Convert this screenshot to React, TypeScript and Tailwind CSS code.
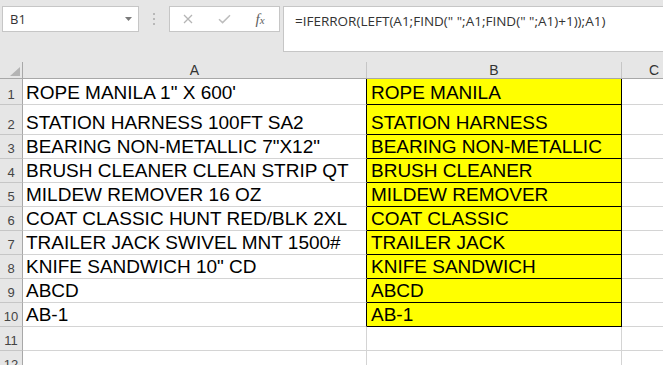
import React from "react";

const aVals = [
  'ROPE MANILA 1" X 600\'',
  "STATION HARNESS 100FT SA2",
  'BEARING NON-METALLIC 7"X12"',
  "BRUSH CLEANER CLEAN STRIP QT",
  "MILDEW REMOVER 16 OZ",
  "COAT CLASSIC HUNT RED/BLK 2XL",
  "TRAILER JACK SWIVEL MNT 1500#",
  'KNIFE SANDWICH 10" CD',
  "ABCD",
  "AB-1",
  "",
  "",
];
const bVals = [
  "ROPE MANILA",
  "STATION HARNESS",
  "BEARING NON-METALLIC",
  "BRUSH CLEANER",
  "MILDEW REMOVER",
  "COAT CLASSIC",
  "TRAILER JACK",
  "KNIFE SANDWICH",
  "ABCD",
  "AB-1",
  "",
  "",
];
const heights = ["h-[26px]", "h-[30px]", "h-[24px]", "h-[24px]", "h-[24px]", "h-[24px]", "h-[24px]", "h-[24px]", "h-[24px]", "h-[24px]", "h-[24px]", "h-[24px]"];

function Row({ i }: { i: number }) {
  const hl = i < 10;
  return (
    <div className={`flex ${heights[i]} shrink-0`}>
      <div className="w-[23px] shrink-0 bg-[#e6e6e6] border-r border-r-[#a8a8a8] border-b border-b-[#c6c6c6] flex items-end justify-center pb-[3px]">
        <span className="text-[13px] leading-[13px] text-[#444]">{i + 1}</span>
      </div>
      <div
        className={`w-[344px] shrink-0 border-b border-b-[#d4d4d4] border-r ${
          hl ? "border-r-black" : "border-r-[#d4d4d4]"
        } flex items-end pl-[3px] pb-[2px]`}
      >
        <span className="text-[19px] leading-[19px] text-black whitespace-nowrap">{aVals[i]}</span>
      </div>
      <div
        className={`w-[255px] shrink-0 border-r border-b ${
          hl ? "border-black bg-[#ffff00]" : "border-[#d4d4d4] bg-white"
        } flex items-end pl-[4px] pb-[2px]`}
      >
        <span className="text-[19px] leading-[19px] text-black whitespace-nowrap">{bVals[i]}</span>
      </div>
      <div className="flex-1 border-b border-b-[#d4d4d4]" />
    </div>
  );
}

export default function App() {
  return (
    <div className="w-[663px] h-[365px] overflow-hidden bg-white font-['Liberation_Sans',Arial,sans-serif] flex flex-col">
      {/* toolbar */}
      <div className="h-[52px] shrink-0 bg-[#e6e6e6] flex items-start pt-[6px] pl-[2px]">
        <div className="w-[137px] h-[26px] shrink-0 bg-white border border-[#c6c6c6] flex items-center justify-between pl-[7px] pr-[6px]">
          <span className="font-['Open_Sans',sans-serif] text-[13px] leading-[16px] text-[#333]">B1</span>
          <svg width="7" height="4" viewBox="0 0 7 4">
            <path d="M0 0h7L3.5 4z" fill="#7a7a7a" />
          </svg>
        </div>
        <div className="w-[30px] shrink-0 flex flex-col items-center gap-[3px] pt-[7px]">
          <div className="w-[2px] h-[2px] bg-[#b8b8b8]" />
          <div className="w-[2px] h-[2px] bg-[#b8b8b8]" />
          <div className="w-[2px] h-[2px] bg-[#b8b8b8]" />
        </div>
        <div className="w-[111px] h-[26px] shrink-0 bg-white border border-[#c6c6c6] flex items-center">
          <div className="w-[36px] flex justify-center">
            <svg width="10" height="10" viewBox="0 0 10 10">
              <path d="M1 1L9 9M9 1L1 9" stroke="#b5b5b5" strokeWidth="1.3" />
            </svg>
          </div>
          <div className="w-[36px] flex justify-center">
            <svg width="13" height="10" viewBox="0 0 13 10">
              <path d="M1 5.2L4.6 8.6L12 1.2" stroke="#bdbdbd" strokeWidth="1.5" fill="none" />
            </svg>
          </div>
          <div className="w-[36px] flex justify-center">
            <span className="italic font-['Liberation_Serif',serif] text-[15px] leading-[16px] text-[#5f5f5f]">
              f<span className="text-[11px]">x</span>
            </span>
          </div>
        </div>
        <div className="ml-[3px] mr-[-3px] flex-1 h-[46px] bg-white border border-[#c6c6c6] pl-[11px] pt-[2px]">
          <span className="font-['Open_Sans',sans-serif] text-[13.5px] leading-[19px] text-[#333] whitespace-nowrap">
            =IFERROR(LEFT(A1;FIND(" ";A1;FIND(" ";A1)+1));A1)
          </span>
        </div>
      </div>
      <div className="h-[10px] shrink-0 bg-[#e6e6e6]" />
      {/* column headers */}
      <div className="h-[17px] shrink-0 flex bg-[#e6e6e6] border-b border-b-[#a8a8a8]">
        <div className="w-[23px] shrink-0 border-r border-r-[#a8a8a8] flex items-end justify-end pr-[2px] pb-[2px]">
          <svg width="10" height="9" viewBox="0 0 10 9">
            <path d="M10 0V9H0z" fill="#b4b4b4" />
          </svg>
        </div>
        <div className="w-[344px] shrink-0 border-r border-r-[#c6c6c6] flex items-center justify-center">
          <span className="text-[14px] leading-[14px] text-[#333]">A</span>
        </div>
        <div className="w-[255px] shrink-0 border-r border-r-[#c6c6c6] flex items-center justify-center">
          <span className="text-[14px] leading-[14px] text-[#333]">B</span>
        </div>
        <div className="flex-1 flex items-center pl-[27px]">
          <span className="text-[14px] leading-[14px] text-[#333]">C</span>
        </div>
      </div>
      {Array.from({ length: 12 }, (_, i) => (
        <Row key={i} i={i} />
      ))}
    </div>
  );
}
